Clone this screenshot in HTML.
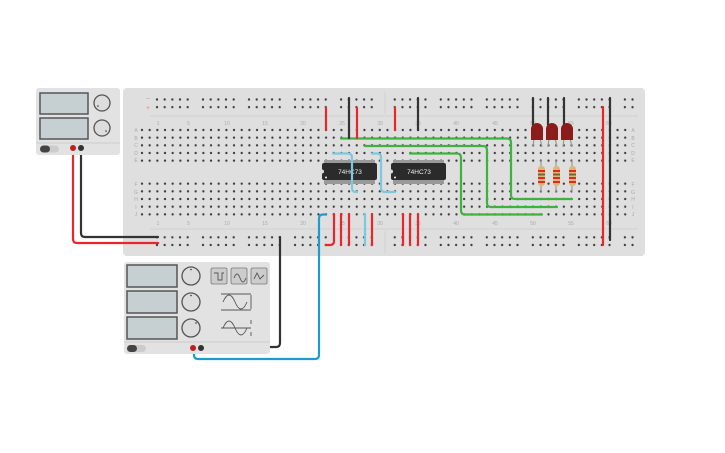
<!DOCTYPE html>
<html><head><style>
html,body{margin:0;padding:0;background:#fff;width:725px;height:453px;overflow:hidden}
svg{display:block}
text{font-family:"Liberation Sans",sans-serif}
</style></head><body>
<svg width="725" height="453" viewBox="0 0 725 453" xmlns="http://www.w3.org/2000/svg">
<defs>
<pattern id="h" patternUnits="userSpaceOnUse" x="138.17" y="126.17" width="7.67" height="7.67"><circle cx="3.83" cy="3.83" r="1.15" fill="#3a3a3a"/></pattern>
<pattern id="r" patternUnits="userSpaceOnUse" x="153.17" y="95.67" width="7.67" height="7.67"><circle cx="3.83" cy="3.83" r="1.15" fill="#3a3a3a"/></pattern>
<pattern id="r2" patternUnits="userSpaceOnUse" x="153.17" y="233.5" width="7.67" height="7.67"><circle cx="3.83" cy="3.83" r="1.15" fill="#3a3a3a"/></pattern>
</defs>
<rect x="123" y="88" width="522" height="168" rx="4" fill="#dfdfdf"/>
<line x1="150" y1="116" x2="638" y2="116" stroke="#d0d0d0"/>
<line x1="150" y1="229" x2="638" y2="229" stroke="#d0d0d0"/>
<line x1="385" y1="92" x2="385" y2="114" stroke="#d0d0d0"/>
<line x1="385" y1="231" x2="385" y2="253" stroke="#d0d0d0"/>
<rect x="138" y="126.2" width="491" height="38.3" fill="url(#h)"/>
<rect x="138" y="180" width="491" height="38.4" fill="url(#h)"/>
<g fill="url(#r)">
<rect x="153" y="95.7" width="38" height="15.3"/><rect x="199" y="95.7" width="38" height="15.3"/><rect x="245" y="95.7" width="38" height="15.3"/><rect x="291" y="95.7" width="38" height="15.3"/><rect x="337" y="95.7" width="38" height="15.3"/>
<rect x="391" y="95.7" width="38" height="15.3"/><rect x="437" y="95.7" width="38" height="15.3"/><rect x="483" y="95.7" width="38" height="15.3"/><rect x="529" y="95.7" width="38" height="15.3"/><rect x="575" y="95.7" width="38" height="15.3"/><rect x="621" y="95.7" width="15" height="15.3"/>
</g>
<g fill="url(#r2)">
<rect x="153" y="233.5" width="38" height="15.3"/><rect x="199" y="233.5" width="38" height="15.3"/><rect x="245" y="233.5" width="38" height="15.3"/><rect x="291" y="233.5" width="38" height="15.3"/><rect x="337" y="233.5" width="38" height="15.3"/>
<rect x="391" y="233.5" width="38" height="15.3"/><rect x="437" y="233.5" width="38" height="15.3"/><rect x="483" y="233.5" width="38" height="15.3"/><rect x="529" y="233.5" width="38" height="15.3"/><rect x="575" y="233.5" width="38" height="15.3"/><rect x="621" y="233.5" width="15" height="15.3"/>
</g>
<g font-size="5" fill="#aaa" text-anchor="middle">
<text x="158" y="125">1</text><text x="188.5" y="125">5</text><text x="227" y="125">10</text><text x="265" y="125">15</text><text x="303" y="125">20</text><text x="342" y="125">25</text><text x="380" y="125">30</text><text x="418" y="125">35</text><text x="456" y="125">40</text><text x="495" y="125">45</text><text x="533" y="125">50</text><text x="571" y="125">55</text><text x="609" y="125">60</text>
<text x="158" y="225">1</text><text x="188.5" y="225">5</text><text x="227" y="225">10</text><text x="265" y="225">15</text><text x="303" y="225">20</text><text x="342" y="225">25</text><text x="380" y="225">30</text><text x="418" y="225">35</text><text x="456" y="225">40</text><text x="495" y="225">45</text><text x="533" y="225">50</text><text x="571" y="225">55</text><text x="609" y="225">60</text>
<text x="136" y="132">A</text><text x="136" y="140">B</text><text x="136" y="147">C</text><text x="136" y="155">D</text><text x="136" y="162">E</text><text x="136" y="186">F</text><text x="136" y="194">G</text><text x="136" y="201">H</text><text x="136" y="209">I</text><text x="136" y="216">J</text>
<text x="633" y="132">A</text><text x="633" y="140">B</text><text x="633" y="147">C</text><text x="633" y="155">D</text><text x="633" y="162">E</text><text x="633" y="186">F</text><text x="633" y="194">G</text><text x="633" y="201">H</text><text x="633" y="209">I</text><text x="633" y="216">J</text>
</g>
<text x="146" y="101" font-size="7" fill="#8ab">−</text><text x="146" y="110" font-size="7" fill="#e88">+</text>
<g fill="#999">
<rect x="324" y="160" width="51" height="24"/>
<rect x="393" y="160" width="51" height="24"/>
</g>
<rect x="322" y="163" width="55" height="17" rx="2" fill="#2b2b2b"/>
<rect x="391" y="163" width="55" height="17" rx="2" fill="#2b2b2b"/>
<circle cx="322" cy="171.5" r="2" fill="#ddd"/><circle cx="391" cy="171.5" r="2" fill="#ddd"/>
<circle cx="326" cy="177.5" r="1" fill="#eee"/><circle cx="395" cy="177.5" r="1" fill="#eee"/>
<text x="350" y="174" font-size="6.5" fill="#eee" text-anchor="middle" font-family="Liberation Mono">74HC73</text>
<text x="419" y="174" font-size="6.5" fill="#eee" text-anchor="middle" font-family="Liberation Mono">74HC73</text>
<g fill="none" stroke-width="2.2" stroke-linecap="round" stroke-linejoin="round">
<path d="M341 138.5H507q4 0 4 4V195q0 4 4 4H572" stroke="#3db33d"/>
<path d="M365 146H483q4 0 4 4V203q0 4 4 4H557" stroke="#3db33d"/>
<path d="M410 153.5H457q4 0 4 4V210.5q0 4 4 4H542" stroke="#3db33d"/>
<path d="M333 153.5H348q4 0 4 4V188q0 4 4 4H357" stroke="#7cc8dc"/>
<path d="M372 153.5H377q4 0 4 4V188q0 4 4 4H395" stroke="#7cc8dc"/>
<path d="M365 214V245" stroke="#7cc8dc"/>
<path d="M326 108V130M357 108V138M395 108V130M603 107V245M334 214V241q0 4-4 4H326M341 214V245M349 214V245M372 214V245M403 214V245M410 214V245M418 214V245" stroke="#e8262b"/>
<path d="M349 98V138M418 98V130M533 98V125M548 98V125M564 98V125M610 98V240" stroke="#333"/>
<path d="M326 214.5H323q-4 0-4 4V355q0 4-4 4H198q-4 0-4-4V348" stroke="#1b9bd1"/>
<path d="M280 237V343q0 4-4 4H201" stroke="#333"/>
<path d="M73 148V239q0 4 4 4H158" stroke="#e8262b"/>
<path d="M81 148V233q0 4 4 4H158" stroke="#333"/>
</g>
<g stroke="#999" stroke-width="1.2">
<path d="M534 138l-1 9M540 138l2 9M549 138l-1 9M555 138l2 9M564 138l-1 9M570 138l2 9"/>
<path d="M541 160V192M556 160V192M572 160V192"/>
</g>
<g fill="#8b1c1c">
<path d="M531 140V129a6 6 0 0 1 12 0V140z"/><path d="M546 140V129a6 6 0 0 1 12 0V140z"/><path d="M561 140V129a6 6 0 0 1 12 0V140z"/>
</g>
<g fill="#dcb77a">
<rect x="538" y="166" width="7" height="20" rx="3"/><rect x="553" y="166" width="7" height="20" rx="3"/><rect x="569" y="166" width="7" height="20" rx="3"/>
</g>
<g fill="#e02a20">
<rect x="538" y="170" width="7" height="2"/><rect x="538" y="177" width="7" height="2"/><rect x="538" y="181" width="7" height="2"/>
<rect x="553" y="170" width="7" height="2"/><rect x="553" y="177" width="7" height="2"/><rect x="553" y="181" width="7" height="2"/>
<rect x="569" y="170" width="7" height="2"/><rect x="569" y="177" width="7" height="2"/><rect x="569" y="181" width="7" height="2"/>
</g>
<g fill="#8a5a2a"><rect x="538" y="173.5" width="7" height="2"/><rect x="553" y="173.5" width="7" height="2"/><rect x="569" y="173.5" width="7" height="2"/></g>
<rect x="36" y="88" width="84" height="67" rx="3" fill="#e2e2e2"/>
<line x1="36" y1="143" x2="120" y2="143" stroke="#ccc"/>
<rect x="40" y="93" width="48" height="21" fill="#c6d0d3" stroke="#555" stroke-width="1.5"/>
<rect x="40" y="118" width="48" height="21" fill="#c6d0d3" stroke="#555" stroke-width="1.5"/>
<circle cx="102" cy="103" r="8" fill="#ddd" stroke="#555" stroke-width="1.3"/>
<circle cx="102" cy="128" r="8" fill="#ddd" stroke="#555" stroke-width="1.3"/>
<circle cx="98" cy="106" r="0.8" fill="#333"/><circle cx="106" cy="131" r="0.8" fill="#333"/>
<rect x="40" y="145.5" width="19" height="7" rx="3.5" fill="#ccc"/><rect x="40" y="145.5" width="10" height="7" rx="3.5" fill="#444"/>
<circle cx="73" cy="148" r="3" fill="#c31d1d"/><circle cx="81" cy="148" r="3" fill="#333"/>
<rect x="124" y="262" width="146" height="92" rx="3" fill="#e2e2e2"/>
<line x1="124" y1="342" x2="270" y2="342" stroke="#ccc"/>
<rect x="127" y="265" width="50" height="22" fill="#c6d0d3" stroke="#555" stroke-width="1.5"/>
<rect x="127" y="291" width="50" height="22" fill="#c6d0d3" stroke="#555" stroke-width="1.5"/>
<rect x="127" y="317" width="50" height="22" fill="#c6d0d3" stroke="#555" stroke-width="1.5"/>
<circle cx="191" cy="276" r="9" fill="#ddd" stroke="#555" stroke-width="1.3"/>
<circle cx="191" cy="302" r="9" fill="#ddd" stroke="#555" stroke-width="1.3"/>
<circle cx="191" cy="328" r="9" fill="#ddd" stroke="#555" stroke-width="1.3"/>
<circle cx="191" cy="269.5" r="0.8" fill="#333"/><circle cx="191" cy="295.5" r="0.8" fill="#333"/><circle cx="196" cy="323" r="0.8" fill="#333"/>
<g fill="#ccc" stroke="#777" stroke-width="0.8">
<rect x="211" y="268" width="16" height="16" rx="1.5"/><rect x="231" y="268" width="16" height="16" rx="1.5"/><rect x="251" y="268" width="16" height="16" rx="1.5"/>
</g>
<g fill="none" stroke="#555" stroke-width="0.9">
<path d="M214 273h4v7h4v-7h2"/><path d="M234 278q3-8 6 0t6 0"/><path d="M254 279l3-6 3 6 4-4"/>
<path d="M223 302q6-14 12 0t12 0M221 294h30M221 310h30M251 295v14"/>
<path d="M223 328q6-14 12 0t12 0M221 328h30M251 320v4M251 332v4"/>
</g>
<rect x="127" y="345" width="19" height="7" rx="3.5" fill="#ccc"/><rect x="127" y="345" width="10" height="7" rx="3.5" fill="#444"/>
<circle cx="193" cy="348" r="3" fill="#c31d1d"/><circle cx="201" cy="348" r="3" fill="#333"/>
</svg>
</body></html>
